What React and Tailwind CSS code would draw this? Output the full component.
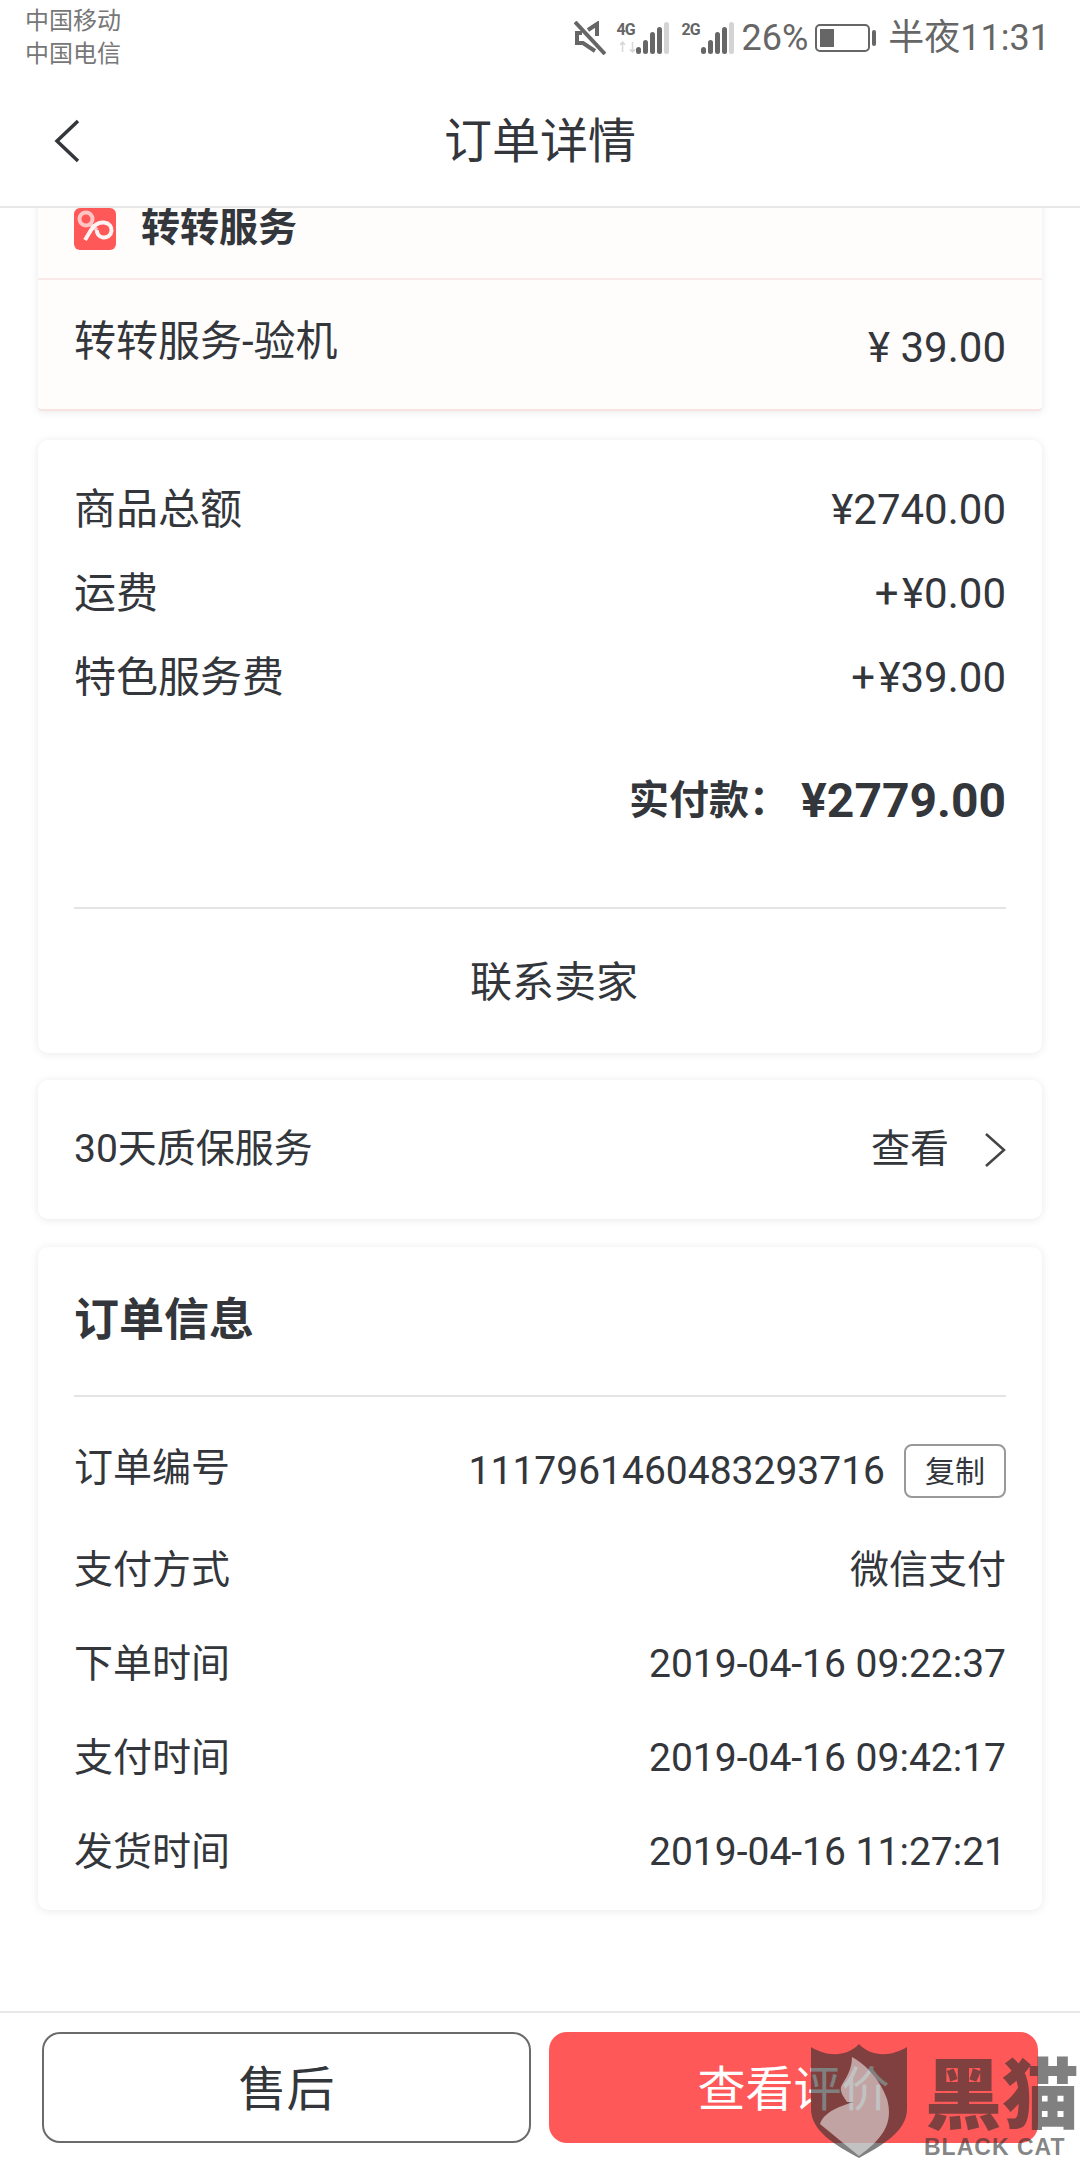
const font = { fontFamily: 'Roboto, "Noto Sans CJK SC", sans-serif' }

function Bars() {
  return (
    <div className="flex items-end gap-[2px] h-[32px]">
      <div className="w-[5px] h-[7px] rounded-full bg-[#666]" />
      <div className="w-[5px] h-[14px] rounded-full bg-[#666]" />
      <div className="w-[5px] h-[22px] rounded-full bg-[#666]" />
      <div className="w-[5px] h-[27px] rounded-full bg-[#666]" />
      <div className="w-[5px] h-[32px] rounded-full bg-[#d4d4d4]" />
    </div>
  )
}

function StatusBar() {
  return (
    <div className="h-[76px] pl-[25px] pr-[30px] flex items-start justify-between">
      <div className="pt-[5px] text-[24px] leading-[33px] text-[#777]">
        <div>中国移动</div>
        <div>中国电信</div>
      </div>
      <div className="flex items-center h-[76px] text-[#666]">
        <svg width="32" height="34" viewBox="0 0 32 34" fill="none" stroke="#666" strokeWidth="4">
          <path d="M1 1l30 32" />
          <path d="M8 12H3v10h6l12 8M23 15V3l-9 6" />
        </svg>
        <div className="ml-[11px] flex items-end gap-[1px]">
          <div className="flex flex-col w-[18px] h-[32px] justify-between">
            <span className="text-[16px] leading-[15px] font-bold tracking-[-1px]">4G</span>
            <span className="text-[12px] leading-[12px] text-[#d4d4d4] font-bold tracking-[-2px]">↑↓</span>
          </div>
          <Bars />
        </div>
        <div className="ml-[13px] flex items-end gap-[1px]">
          <div className="flex flex-col w-[18px] h-[32px]">
            <span className="text-[16px] leading-[15px] font-bold tracking-[-1px]">2G</span>
          </div>
          <Bars />
        </div>
        <span className="ml-[8px] text-[36px]">26%</span>
        <div className="ml-[7px] w-[55px] h-[28px] border-2 border-[#666] rounded-[5px] p-[3px]">
          <div className="w-[14px] h-full bg-[#666]" />
        </div>
        <div className="ml-[2px] w-[4px] h-[16px] rounded-full bg-[#666]" />
        <span className="ml-[12px] text-[36px]">半夜11:31</span>
      </div>
    </div>
  )
}

function Row({ label, value, size = 'text-[42px]', className = '' }) {
  return (
    <div className={`flex items-center justify-between ${size} ${className}`}>
      <span>{label}</span>
      <span>{value}</span>
    </div>
  )
}

function Watermark() {
  return (
    <div className="absolute right-0 bottom-0 w-[270px] h-[116px]">
      <svg className="absolute left-0 top-0" width="98" height="114" viewBox="0 0 98 114">
        <path d="M1 3c16 10 36 10 48-3 12 13 32 13 48 3v62c0 22-24 36-48 49C25 101 1 87 1 65z" fill="rgba(50,50,50,.62)" />
        <path d="M42 13C55 20 70 35 77 55c7 25-5 40-28 57L10 80c4-12 20-18 34-22h-7c-4-6-7-10-6-15 3-7 11-15 11-30z" fill="rgba(255,255,255,.52)" />
      </svg>
      <div className="absolute left-[115px] top-[18px] text-[77px] leading-[70px] font-black whitespace-nowrap text-[rgba(50,50,50,.62)]">黑猫</div>
      <div className="absolute left-[114px] top-[90px] text-[23px] leading-[26px] font-black whitespace-nowrap tracking-[1px] text-[rgba(50,50,50,.6)]" style={{ fontFamily: '"Liberation Sans", sans-serif' }}>BLACK CAT</div>
    </div>
  )
}

export default function App() {
  const card = 'mx-[38px] rounded-[10px] shadow-[0_1px_10px_rgba(0,0,0,0.09)]'
  return (
    <div className="relative w-[1080px] h-[2160px] bg-white flex flex-col overflow-hidden text-[#33363b]" style={font}>
      <header className="h-[208px] shrink-0 border-b-2 border-[#e8e8e8] bg-white">
        <StatusBar />
        <div className="relative h-[130px] flex items-center justify-center">
          <svg className="absolute left-[54px] top-[43px]" width="26" height="44" viewBox="0 0 26 44" fill="none" stroke="#33363b" strokeWidth="3.5">
            <path d="M24 2L3 22l21 20" />
          </svg>
          <h1 className="text-[48px] font-normal mt-[2px]">订单详情</h1>
        </div>
      </header>

      <main className="flex-1 overflow-hidden">
        <div className="-mt-[29px] flex flex-col">
          <section className={`${card} bg-[#fffcfc] border-b-2 border-[#f8e2e2] rounded-t-none rounded-b-[4px]`}>
            <div className="h-[101px] px-[36px] flex items-center border-b-2 border-[#f9e9e9]">
              <div className="w-[42px] h-[42px] rounded-[6px] bg-[#ff5858]">
                <svg width="42" height="42" viewBox="0 0 42 42" fill="none" strokeWidth="4">
                  <circle cx="12" cy="11" r="6.5" stroke="#ffc4c4" />
                  <path d="M16 16l7 6" stroke="#ffc4c4" />
                  <path d="M11 32l6-10c3-5 8-8 13-7.5 5 .5 8 4 7.5 8.5-.5 4.5-4.5 7-8.5 6.5-4-.5-6.5-4-6-7.5" stroke="#fff3f3" />
                </svg>
              </div>
              <span className="ml-[25px] text-[39px] leading-none font-bold">转转服务</span>
            </div>
            <div className="h-[129px] pl-[36px] pr-[36px] flex items-center justify-between">
              <span className="text-[42px] -mt-[6px]">转转服务-验机</span>
              <span className="text-[42px] mt-[6px]">¥ 39.00</span>
            </div>
          </section>

          <section className={`${card} bg-white mt-[29px] h-[613px] px-[36px] flex flex-col`}>
            <Row label="商品总额" value="¥2740.00" className="mt-[40px] h-[58px]" />
            <Row label="运费" value="+ ¥0.00" className="mt-[26px] h-[58px] [word-spacing:-7px]" />
            <Row label="特色服务费" value="+ ¥39.00" className="mt-[26px] h-[58px] [word-spacing:-7px]" />
            <div className="mt-[65px] h-[60px] flex items-center justify-end font-bold">
              <span className="text-[40px]">实付款：</span>
              <span className="ml-[12px] text-[48px]">¥2779.00</span>
            </div>
            <div className="mt-[76px] border-t-2 border-[#e4e4e4]" />
            <div className="flex-1 flex items-center justify-center text-[42px] pl-[28px] pt-[2px]">联系卖家</div>
          </section>

          <section className={`${card} bg-white mt-[27px] h-[139px] px-[36px] flex items-center justify-between text-[39px]`}>
            <span>30天质保服务</span>
            <div className="flex items-center">
              <span>查看</span>
              <svg className="ml-[35px]" width="22" height="36" viewBox="0 0 22 36" fill="none" stroke="#444" strokeWidth="2.5">
                <path d="M2 2l18 16L2 34" />
              </svg>
            </div>
          </section>

          <section className={`${card} bg-white mt-[28px] h-[663px] px-[36px] flex flex-col`}>
            <div className="h-[150px] flex items-center border-b-2 border-[#e4e4e4]">
              <h2 className="text-[45px] font-bold">订单信息</h2>
            </div>
            <div className="mt-[44px] h-[60px] flex items-center justify-between text-[39px]">
              <span className="-mt-[6px]">订单编号</span>
              <div className="flex items-center">
                <span>1117961460483293716</span>
                <button className="ml-[19px] w-[102px] h-[54px] border-2 border-[#999] rounded-[8px] text-[30px]">复制</button>
              </div>
            </div>
            <Row label="支付方式" value="微信支付" size="text-[39px]" className="mt-[39px] h-[60px]" />
            <Row label="下单时间" value="2019-04-16 09:22:37" size="text-[39px]" className="mt-[34px] h-[60px]" />
            <Row label="支付时间" value="2019-04-16 09:42:17" size="text-[39px]" className="mt-[34px] h-[60px]" />
            <Row label="发货时间" value="2019-04-16 11:27:21" size="text-[39px]" className="mt-[34px] h-[60px]" />
          </section>
        </div>
      </main>

      <footer className="h-[149px] shrink-0 border-t-2 border-[#e8e8e8] pt-[19px] pl-[42px] pr-[42px] flex gap-[18px]">
        <button className="w-[489px] h-[111px] border-2 border-[#6b6b6b] rounded-[18px] text-[48px] pt-[4px]">售后</button>
        <button className="w-[489px] h-[111px] rounded-[18px] bg-[#ff5858] text-white text-[48px] pt-[4px]">查看评价</button>
      </footer>

      <Watermark />
    </div>
  )
}
